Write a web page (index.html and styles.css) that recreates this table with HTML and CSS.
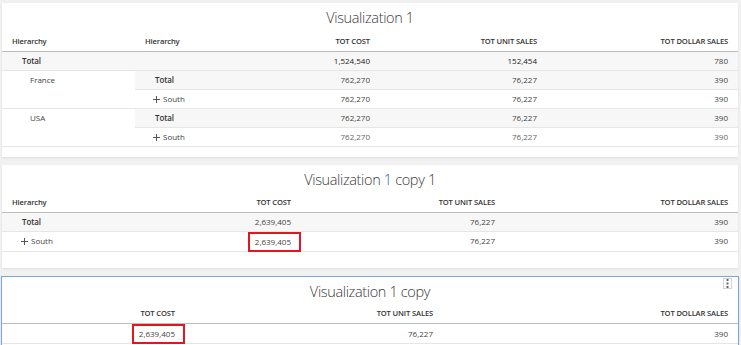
FILE: index.html
```html
<!DOCTYPE html>
<html>
<head>
<meta charset="utf-8">
<link rel="stylesheet" href="styles.css">
</head>
<body>
<div class="stack">
  <section class="card card-one">
    <h2 class="title">Visualization 1</h2>
    <table class="grid">
      <colgroup><col style="width:133px"><col style="width:125px"><col style="width:120px"><col style="width:167px"><col style="width:191px"></colgroup>
      <thead>
        <tr><th class="l">Hierarchy</th><th class="l">Hierarchy</th><th>TOT COST</th><th>TOT UNIT SALES</th><th>TOT DOLLAR SALES</th></tr>
      </thead>
      <tbody>
        <tr class="shade"><td class="l strong lvl1" colspan="2">Total</td><td class="dark">1,524,540</td><td class="dark">152,454</td><td>780</td></tr>
        <tr><td class="l lvl2 plain" rowspan="2">France</td><td class="l strong lvl1 shade">Total</td><td class="shade">762,270</td><td class="shade">76,227</td><td class="shade">390</td></tr>
        <tr><td class="l exp"><span class="plus"><svg width="7" height="7" viewBox="0 0 7 7"><path d="M3.5 0V7M0 3.5H7" stroke="#555" stroke-width="1"/></svg></span>South</td><td>762,270</td><td>76,227</td><td>390</td></tr>
        <tr><td class="l lvl2 plain" rowspan="2">USA</td><td class="l strong lvl1 shade">Total</td><td class="shade">762,270</td><td class="shade">76,227</td><td class="shade">390</td></tr>
        <tr><td class="l exp"><span class="plus"><svg width="7" height="7" viewBox="0 0 7 7"><path d="M3.5 0V7M0 3.5H7" stroke="#555" stroke-width="1"/></svg></span>South</td><td class="muted">762,270</td><td class="muted">76,227</td><td class="muted">390</td></tr>
      </tbody>
    </table>
  </section>

  <section class="card card-two">
    <h2 class="title">Visualization <span class="blue">1</span> copy 1</h2>
    <table class="grid">
      <colgroup><col style="width:198px"><col style="width:101px"><col style="width:204px"><col style="width:233px"></colgroup>
      <thead>
        <tr><th class="l">Hierarchy</th><th>TOT COST</th><th>TOT UNIT SALES</th><th>TOT DOLLAR SALES</th></tr>
      </thead>
      <tbody>
        <tr class="shade"><td class="l strong lvl1">Total</td><td>2,639,405</td><td>76,227</td><td>390</td></tr>
        <tr><td class="l exp2"><span class="plus"><svg width="7" height="7" viewBox="0 0 7 7"><path d="M3.5 0V7M0 3.5H7" stroke="#555" stroke-width="1"/></svg></span>South</td><td><span class="mark">2,639,405</span></td><td>76,227</td><td>390</td></tr>
      </tbody>
    </table>
  </section>

  <section class="card card-three">
    <button class="kebab" type="button" aria-label="menu"><svg width="3" height="9" viewBox="0 0 3 9"><rect x="0.5" y="0" width="2" height="2" fill="#666"/><rect x="0.5" y="3.5" width="2" height="2" fill="#666"/><rect x="0.5" y="7" width="2" height="2" fill="#666"/></svg></button>
    <h2 class="title">Visualization 1 copy</h2>
    <table class="grid">
      <colgroup><col style="width:183px"><col style="width:258px"><col style="width:295px"></colgroup>
      <thead>
        <tr><th>TOT COST</th><th>TOT UNIT SALES</th><th>TOT DOLLAR SALES</th></tr>
      </thead>
      <tbody>
        <tr><td><span class="mark">2,639,405</span></td><td>76,227</td><td>390</td></tr>
      </tbody>
    </table>
  </section>
</div>
</body>
</html>
```

FILE: styles.css
```css
html, body {
  margin: 0;
  padding: 0;
  background: #f1f1f1;
  height: 100%;
  overflow: hidden;
}

body {
  font-family: "Open Sans", "Noto Sans", sans-serif;
  color: #444;
}

.stack {
  display: flex;
  flex-direction: column;
  gap: 8px;
  padding: 3px 3px 0 2px;
}

.card {
  background: #fff;
  box-shadow: 0 1px 2px rgba(0, 0, 0, 0.08);
  position: relative;
}

.card-one { padding-bottom: 10px; }
.card-two { padding-bottom: 16px; }

.card-three {
  margin-left: -1px;
  margin-right: -1px;
  border: 1px solid #78a7df;
  border-bottom: none;
  height: 80px;
}

.title {
  margin: 0;
  height: 27px;
  padding-top: 3px;
  box-sizing: border-box;
  text-align: center;
  font-size: 14.5px;
  line-height: 24px;
  font-weight: 300;
  color: #3a3a3a;
  letter-spacing: -0.35px;
}

.card-three .title { height: 26px; }

.blue { color: #2e5fa8; }

.grid {
  width: 736px;
  table-layout: fixed;
  border-collapse: collapse;
  font-size: 8px;
}

.grid th {
  font-weight: 600;
  font-size: 7.6px;
  letter-spacing: -0.15px;
  color: #333;
  text-align: right;
  height: 21px;
  box-sizing: border-box;
  padding: 5px 10px 5px 10px;
  line-height: 10px;
  vertical-align: bottom;
  border-bottom: 1px solid #bcbcbc;
  white-space: nowrap;
}

.grid td {
  text-align: right;
  height: 18px;
  padding: 0 10px;
  line-height: 18px;
  border-bottom: 1px solid #e6e6e6;
  white-space: nowrap;
  color: #444;
}

.grid .l { text-align: left; }

.shade, .grid td.shade { background: #f7f7f7; }

.grid td.plain { background: #fff; vertical-align: top; }

.strong { font-weight: 600; color: #333; letter-spacing: -0.1px; }
.grid td.strong { color: #333; }
.grid td.dark { color: #222; }

.grid td.lvl1 { padding-left: 20px; }
.grid td.lvl2 { padding-left: 28px; }
.grid td.exp { padding-left: 18px; }
.grid td.exp2 { padding-left: 19px; }

.grid td.muted { color: #666; }

.plus {
  display: inline-block;
  width: 7px;
  height: 7px;
  margin-right: 3px;
  vertical-align: -1px;
}

.plus svg { display: block; }

.mark {
  display: inline-block;
  border: 2px solid #e01720;
  padding: 0 8px 0 5px;
  line-height: 16px;
  margin: -1px -10px -1px 0;
  vertical-align: middle;
}

.kebab {
  position: absolute;
  top: 1px;
  right: 6px;
  width: 9px;
  height: 11px;
  padding: 0;
  margin: 0;
  border: 1px solid #d4d4d4;
  background: #fff;
  display: flex;
  align-items: center;
  justify-content: center;
}

.kebab svg { display: block; }
```
